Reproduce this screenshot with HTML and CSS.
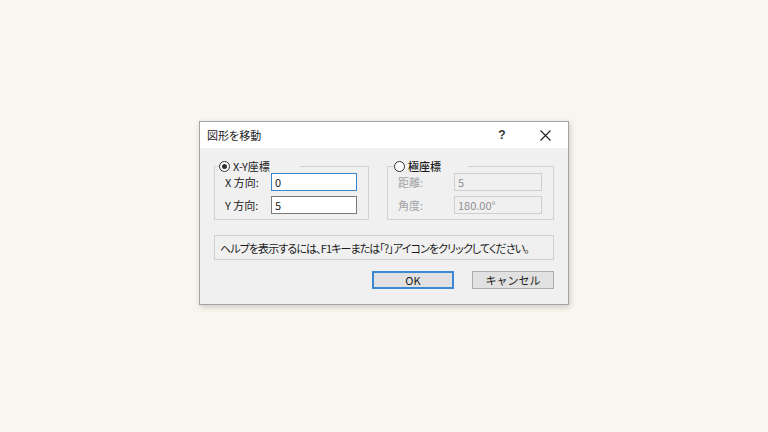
FILE: index.html
```html
<!DOCTYPE html>
<html lang="ja">
<head>
<meta charset="utf-8">
<title>図形を移動</title>
<link rel="stylesheet" href="styles.css">
</head>
<body>
<div class="dialog">
  <div class="titlebar">
    <span class="title">図形を移動</span>
    <span class="tb-btn tb-help">?</span>
    <span class="tb-btn tb-close">
      <svg width="11" height="11" viewBox="0 0 11 11"><path d="M0.5 0.5 L10.5 10.5 M10.5 0.5 L0.5 10.5" stroke="#222" stroke-width="1.1" fill="none"/></svg>
    </span>
  </div>
  <div class="body">
    <div class="groups">
      <fieldset class="group group-xy">
        <legend class="legend legend-xy"><span class="radio checked"></span><span>X-Y座標</span></legend>
        <div class="row"><label class="lbl">X 方向:</label><input class="field focused" type="text" value="0"></div>
        <div class="row"><label class="lbl">Y 方向:</label><input class="field" type="text" value="5"></div>
      </fieldset>
      <fieldset class="group group-polar">
        <legend class="legend legend-polar"><span class="radio"></span><span class="polar-text">極座標</span></legend>
        <div class="row"><label class="lbl disabled">距離:</label><input class="field off" type="text" value="5" disabled></div>
        <div class="row"><label class="lbl disabled">角度:</label><input class="field off" type="text" value="180.00°" disabled></div>
      </fieldset>
    </div>
    <div class="hint">ヘルプを表示するには、F1キーまたは「?」アイコンをクリックしてください。</div>
    <div class="buttons">
      <button class="btn default">OK</button>
      <button class="btn">キャンセル</button>
    </div>
  </div>
</div>
</body>
</html>
```
FILE: styles.css
```css
* { box-sizing: border-box; }
html, body { margin: 0; padding: 0; }
body {
  background: #f8f6ef;
  width: 768px;
  height: 432px;
  padding-top: 121px;
  font-family: "Noto Sans CJK JP", "Liberation Sans", sans-serif;
  font-size: 11px;
  color: #1a1a1a;
  font-feature-settings: "palt";
}
.dialog {
  width: 370px;
  margin: 0 0 0 199px;
  border: 1px solid #a4a4a4;
  background: #f0f0f0;
  box-shadow: 1px 2px 6px rgba(0,0,0,0.18);
}
.titlebar {
  height: 26px;
  background: #ffffff;
  display: flex;
  align-items: center;
}
.title {
  flex: 1;
  padding-left: 7px;
  font-size: 11px;
  line-height: 26px;
  color: #1a1a1a;
}
.tb-btn {
  height: 26px;
  display: flex;
  align-items: center;
  justify-content: center;
}
.tb-help {
  width: 40px;
  font-family: "Liberation Sans", sans-serif;
  font-weight: bold;
  font-size: 12px;
  color: #333;
}
.tb-close { width: 46px; }
.body {
  padding: 11px 14px 15px 14px;
}
.groups {
  display: flex;
  gap: 18px;
}
.group {
  margin: 0;
  min-inline-size: 0;
  border: 1px solid #d2d2d2;
  padding: 0 0 5px 10px;
  display: flex;
  flex-direction: column;
  gap: 5px;
}
.group-xy { width: 155px; }
.group-polar { width: 167px; }
.legend {
  padding: 0;
  height: 14px;
  line-height: 14px;
  display: flex;
  align-items: center;
  gap: 3px;
  color: #1a1a1a;
}
.legend-xy { margin-left: -6px; width: 81px; }
.legend-polar { margin-left: -4px; width: 74px; }
.polar-text { font-weight: 500; }
.radio {
  width: 11px;
  height: 11px;
  border: 1px solid #333;
  border-radius: 50%;
  background: #fff;
  display: inline-flex;
  align-items: center;
  justify-content: center;
  flex: none;
}
.radio.checked::after {
  content: "";
  width: 5px;
  height: 5px;
  border-radius: 50%;
  background: #333;
}
.row {
  display: flex;
  align-items: center;
  height: 18px;
}
.lbl {
  font-size: 11px;
  color: #1a1a1a;
}
.group-xy .lbl { width: 46px; }
.group-polar .lbl { width: 56px; }
.lbl.disabled { color: #a3a3a3; }
.field {
  height: 18px;
  margin: 0;
  padding: 0 3px;
  font-family: "Noto Sans CJK JP", "Liberation Sans", sans-serif;
  font-size: 11px;
  color: #1a1a1a;
  background: #fff;
  border: 1px solid #7a7a7a;
  outline: none;
}
.group-xy .field { width: 86px; }
.group-polar .field { width: 88px; }
.field.focused { border-color: #3a85c8; }
.field.off {
  background: #f0f0f0;
  border-color: #cfcfcf;
  color: #8f8f8f;
}
.hint {
  margin-top: 15px;
  height: 25px;
  border: 1px solid #cfcfcf;
  padding-left: 5px;
  display: flex;
  align-items: center;
  font-size: 11px;
  letter-spacing: -0.9px;
  white-space: nowrap;
  overflow: hidden;
  color: #1a1a1a;
}
.buttons {
  margin-top: 11px;
  display: flex;
  justify-content: flex-end;
  gap: 18px;
}
.btn {
  width: 82px;
  height: 18px;
  margin: 0;
  padding: 0;
  background: #e1e1e1;
  border: 1px solid #adadad;
  font-family: "Noto Sans CJK JP", "Liberation Sans", sans-serif;
  font-size: 11px;
  line-height: 16px;
  color: #1a1a1a;
}
.btn.default {
  border: 2px solid #3a8ad2;
  line-height: 14px;
}
```
